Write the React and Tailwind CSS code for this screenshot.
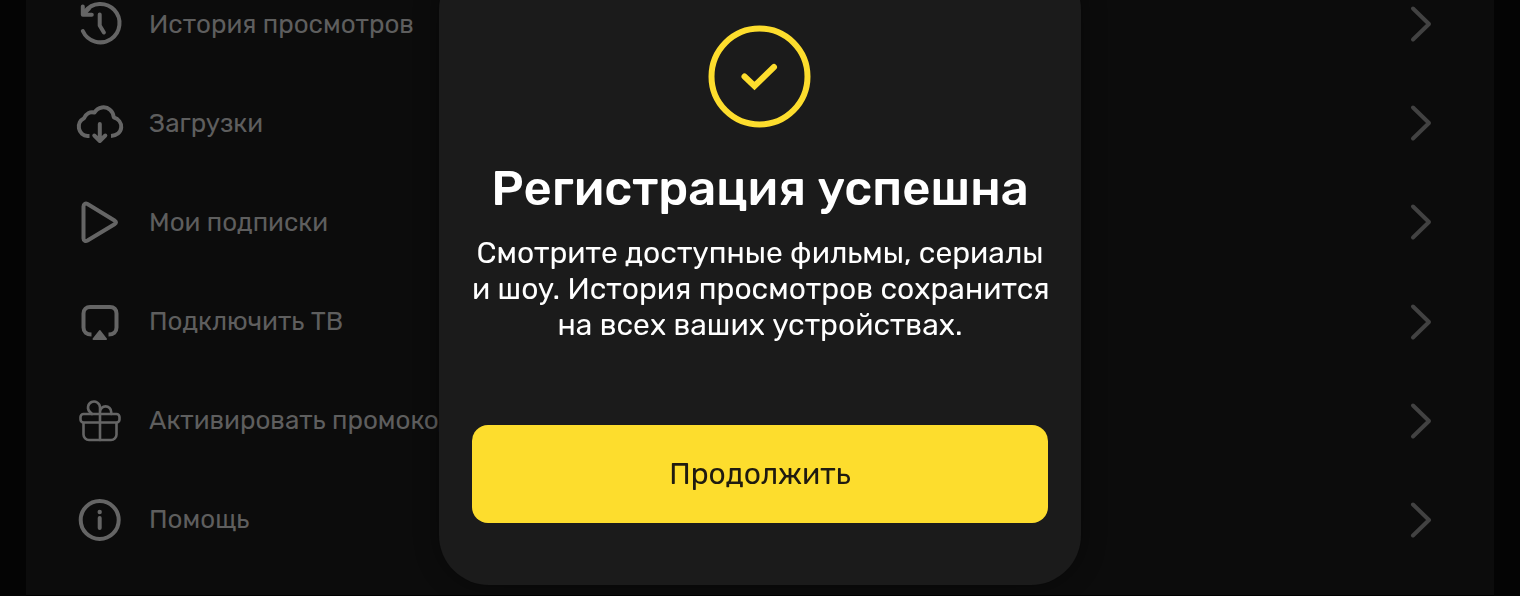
const iconProps = {
  viewBox: "0 0 48 48",
  fill: "none",
  stroke: "currentColor",
  strokeWidth: 4,
  strokeLinecap: "round",
  strokeLinejoin: "round",
  className: "size-12 shrink-0 text-[#656565]",
  "aria-hidden": true,
};

function HistoryIcon() {
  return (
    <svg {...iconProps}>
      <path d="M6.800 31A19.200 19.200 0 1 0 9 11.500" />
      <path d="M6.800 6.500v8.300h9M8 13.500l5-5" />
      <path d="M23.700 14.500v11l4.200 7" />
    </svg>
  );
}

function DownloadIcon() {
  return (
    <svg {...iconProps} strokeLinecap="butt">
      <path d="M13.500 37H11.500A9.400 9.400 0 0 1 8 19.200C10 14.500 14 12.300 18.500 13.500C22 7.700 29.500 6.800 34 10.700C36.500 12.700 37.500 15.700 37.800 18.400C42.500 20 45.600 24 45.200 28.500C44.700 33.500 40.500 36.700 35 37" />
      <path d="M23.800 25v16M18.300 36.500l5.500 5.500L29.300 36.500" strokeLinecap="round" />
    </svg>
  );
}

function PlayIcon() {
  return (
    <svg {...iconProps}>
      <path d="M7.500 8.500C7.500 6 9.500 5 11.500 6L38.500 22.500C40.500 23.700 40.500 25 38.500 26.200L11.500 42.500C9.500 43.600 7.500 42.500 7.500 40.500Z" />
    </svg>
  );
}

function TvIcon() {
  return (
    <svg {...iconProps} strokeLinecap="butt">
      <path d="M15.500 36.500C10.500 36.500 7.500 34 7.500 29.500V15.500C7.500 11.500 10.500 9 14 9H34C38 9 40.500 11.500 40.500 15.500V29.500C40.500 34 37.500 36.500 32.500 36.500" />
      <path d="M23.800 33L30 41H17.500Z" fill="currentColor" strokeWidth="2" />
    </svg>
  );
}

function GiftIcon() {
  return (
    <svg {...iconProps} strokeWidth="2.600">
      <rect x="4.500" y="17" width="39" height="8.500" rx="3" />
      <path d="M7.500 26v11.500a5.500 5.500 0 0 0 5.500 5.500h22a5.500 5.500 0 0 0 5.500-5.500V26" />
      <path d="M24 17v26" />
      <path d="M24 17V10.500A6 6 0 1 0 14 15l2 2M24 15a5.600 5.600 0 0 1 11.200 0v2" />
    </svg>
  );
}

function InfoIcon() {
  return (
    <svg {...iconProps}>
      <circle cx="23.700" cy="24" r="19" />
      <path d="M23.700 22v10" />
      <circle cx="23.700" cy="16" r="2.200" fill="currentColor" stroke="none" />
    </svg>
  );
}

const items = [
  { label: "История просмотров", Icon: HistoryIcon },
  { label: "Загрузки", Icon: DownloadIcon },
  { label: "Мои подписки", Icon: PlayIcon },
  { label: "Подключить ТВ", Icon: TvIcon },
  { label: "Активировать промокод", Icon: GiftIcon },
  { label: "Помощь", Icon: InfoIcon },
];

function MenuItem({ label, Icon }) {
  return (
    <li>
      <a href="#" className="flex h-12 items-center text-[26px] leading-8 text-[#5e5e5e]">
        <Icon />
        <span className="ml-[25px] flex-1 pt-px">{label}</span>
        <svg
          viewBox="0 0 24 40"
          className="h-10 w-6 shrink-0 text-[#424242]"
          fill="none"
          stroke="currentColor"
          strokeWidth="4"
          strokeLinecap="round"
          strokeLinejoin="round"
          aria-hidden="true"
        >
          <path d="M4 4.500L20 20L4 35.500" />
        </svg>
      </a>
    </li>
  );
}

function SuccessDialog() {
  return (
    <div className="fixed inset-0 flex items-end justify-center pb-[11px]">
      <section
        role="dialog"
        aria-modal="true"
        aria-labelledby="dialog-title"
        className="w-full max-w-[642px] rounded-[50px] bg-[#1b1b1b] px-[33px] pt-[66px] pb-[62px] text-center text-white shadow-[0_0_24px_rgba(0,0,0,0.4)]"
      >
        <svg
          viewBox="0 0 102 102"
          className="mx-auto size-[102px] overflow-visible text-[#fddd2d]"
          fill="none"
          stroke="currentColor"
          strokeWidth="6"
          aria-hidden="true"
        >
          <circle cx="50.500" cy="50.500" r="48" />
          <path d="M35.500 50.500L45.500 60L65 41" strokeLinecap="round" />
        </svg>
        <h1 id="dialog-title" className="mt-[30px] text-[49px] leading-[60px] font-medium">
          Регистрация успешна
        </h1>
        <p className="mt-[17px] text-[30px] leading-9">
          Смотрите доступные фильмы, сериалы
          <br />
          <span className="sm:whitespace-nowrap">и шоу. История просмотров сохранится</span>
          <br />
          на всех ваших устройствах.
        </p>
        <button
          type="button"
          className="mt-[82px] h-[98px] w-full rounded-2xl bg-[#fddd2d] text-[30px] leading-9 text-[#1f1b10]"
        >
          Продолжить
        </button>
      </section>
    </div>
  );
}

export default function App() {
  return (
    <div className="min-h-screen bg-[#040404] px-[26px] font-['Rubik','Roboto',sans-serif]">
      <nav className="flex min-h-screen flex-col border-b border-black bg-[#0c0c0c] pr-[61px] pb-[51px] pl-[50px]">
        <ul className="flex flex-1 flex-col justify-between">
          {items.map((item) => (
            <MenuItem key={item.label} {...item} />
          ))}
        </ul>
      </nav>
      <SuccessDialog />
    </div>
  );
}
